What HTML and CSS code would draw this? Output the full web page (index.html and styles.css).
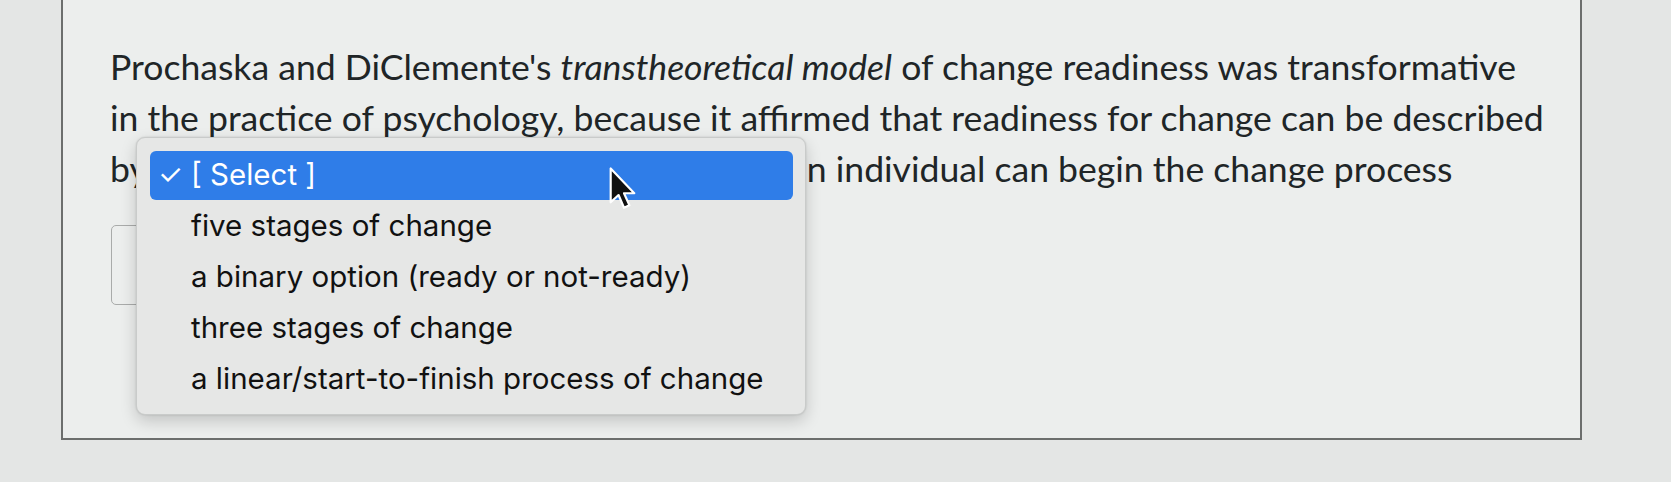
FILE: index.html
```html
<!DOCTYPE html>
<html lang="en">
<head>
    <meta charset="UTF-8">
    <meta name="viewport" content="width=device-width, initial-scale=1.0">
    <title>Question 4</title>
    <link rel="stylesheet" href="styles.css">
</head>
<body>

<!-- Question card -->
<div class="question-card">
    <p class="question-text">
        Prochaska and DiClemente's <em>transtheoretical model</em> of change readiness was transformative<br>
        in the practice of psychology, because it affirmed that readiness for change can be described<br>
        by <span class="select-box"></span> where an individual can begin the change process
    </p>

    <div class="answer-box"></div>

    <!-- Native select popup, open -->
    <div class="select-menu">
        <div class="select-option selected"><span class="check">✓</span>[ Select ]</div>
        <div class="select-option">five stages of change</div>
        <div class="select-option">a binary option (ready or not-ready)</div>
        <div class="select-option">three stages of change</div>
        <div class="select-option">a linear/start-to-finish process of change</div>
    </div>

    <!-- Mouse pointer -->
    <svg class="pointer" width="34" height="46" viewBox="0 0 28 38">
        <path d="M3 2 L3 30 L9.5 24 L14 34.5 L18.5 32.5 L14 22.5 L22.5 22.5 Z" fill="#111" stroke="#fff" stroke-width="1.8" stroke-linejoin="round"/>
    </svg>
</div>

</body>
</html>
```

FILE: styles.css
```css
/* Page background behind the question card */
body {
    margin: 0;
    background-color: #e4e6e5;
    height: 482px;
    overflow: hidden;
}

/* The question card, its top runs past the top of the window */
.question-card {
    position: relative;
    box-sizing: border-box;
    margin-left: 61px;
    width: 1521px;
    height: 440px;
    padding: 41px 0 0 47px;
    background-color: #eceeed;
    border: 2px solid #6c6e6d;
    border-top: none;
}

.question-text {
    margin: 0;
    font-family: Lato, "Open Sans", sans-serif;
    font-size: 35.6px;
    line-height: 51px;
    color: #202527;
    white-space: nowrap;
}

.question-text em {
    font-style: italic;
}

/* Closed select, mostly hidden under its popup */
.select-box {
    display: inline-block;
    width: 516px;
    height: 56px;
    margin-top: -10px;
    vertical-align: -14px;
    border: 1px solid #b4b6b5;
    border-radius: 7px;
}

/* Empty answer field below the text */
.answer-box {
    margin-top: 29px;
    margin-left: 1px;
    width: 300px;
    height: 78px;
    border: 1px solid #a9abaa;
    border-radius: 5px;
}

/* Open select popup */
.select-menu {
    position: absolute;
    left: 73px;
    top: 137px;
    width: 670px;
    box-sizing: border-box;
    padding: 13px 12px 10px 13px;
    background-color: #e6e7e6;
    border: 1px solid #c9cbca;
    border-radius: 9px;
    box-shadow: 0 6px 16px rgba(0, 0, 0, 0.18), 0 0 2px rgba(0, 0, 0, 0.15);
    font-family: Inter, Roboto, sans-serif;
    font-size: 29.5px;
    color: #111111;
}

.select-option {
    position: relative;
    height: 51px;
    line-height: 51px;
    padding-left: 41px;
    white-space: nowrap;
}

.select-option.selected {
    height: 49px;
    line-height: 46px;
    background-color: #2f7de8;
    border-radius: 6px;
    color: #ffffff;
}

.check {
    position: absolute;
    left: 8px;
    font-size: 28px;
}

.pointer {
    position: absolute;
    left: 544px;
    top: 166px;
}
```
